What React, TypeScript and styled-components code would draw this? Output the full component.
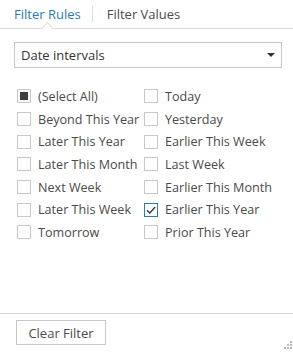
import styled, { createGlobalStyle } from "styled-components";

const GlobalStyle = createGlobalStyle`
  html, body {
    margin: 0;
    padding: 0;
    background: #fff;
  }
  * {
    box-sizing: border-box;
  }
`;

const leftItems = [
  "(Select All)",
  "Beyond This Year",
  "Later This Year",
  "Later This Month",
  "Next Week",
  "Later This Week",
  "Tomorrow",
];

const rightItems = [
  "Today",
  "Yesterday",
  "Earlier This Week",
  "Last Week",
  "Earlier This Month",
  "Earlier This Year",
  "Prior This Year",
];

type BoxState = "off" | "on" | "partial";

const stateFor = (label: string): BoxState => {
  if (label === "(Select All)") return "partial";
  if (label === "Earlier This Year") return "on";
  return "off";
};

const CheckItem = ({ label }: { label: string }) => {
  const state = stateFor(label);
  return (
    <Item>
      <Box checked={state === "on"}>
        {state === "partial" && <Fill />}
        {state === "on" && (
          <svg width="12" height="12" viewBox="0 0 12 12">
            <path d="M2 6.2 L4.8 9 L10.2 3" fill="none" stroke="#333" strokeWidth="1.3" />
          </svg>
        )}
      </Box>
      <Label>{label}</Label>
    </Item>
  );
};

const App = () => {
  return (
    <>
      <GlobalStyle />
      <Panel>
        <Tabs>
          <Tab active>Filter Rules</Tab>
          <Divider />
          <Tab>Filter Values</Tab>
        </Tabs>
        <Body>
          <Select>
            <span>Date intervals</span>
            <Arrow />
          </Select>
          <Grid>
            <Column>
              {leftItems.map((l) => (
                <CheckItem key={l} label={l} />
              ))}
            </Column>
            <Column>
              {rightItems.map((l) => (
                <CheckItem key={l} label={l} />
              ))}
            </Column>
          </Grid>
        </Body>
        <Footer>
          <Button>Clear Filter</Button>
          <Grip>
            <svg width="8" height="8" viewBox="0 0 8 8">
              {[
                [6, 0],
                [6, 3],
                [3, 3],
                [6, 6],
                [3, 6],
                [0, 6],
              ].map(([x, y]) => (
                <rect key={`${x}-${y}`} x={x} y={y} width="2" height="2" fill="#b8b8b8" />
              ))}
            </svg>
          </Grip>
        </Footer>
      </Panel>
    </>
  );
};

export default App;

const Panel = styled.div`
  position: relative;
  width: 293px;
  height: 352px;
  display: flex;
  flex-direction: column;
  font-family: "Open Sans", "Noto Sans", sans-serif;
  font-size: 12.5px;
  color: #4a4a4a;
  background: #fff;
`;

const Tabs = styled.div`
  height: 29px;
  display: flex;
  align-items: center;
  padding: 0 0 0 14px;
  border-bottom: 1px solid #dadada;
`;

const Tab = styled.div<{ active?: boolean }>`
  position: relative;
  height: 28px;
  line-height: 28px;
  font-size: 13px;
  color: ${({ active }) => (active ? "#2b79b5" : "#4a4a4a")};
  padding-right: ${({ active }) => (active ? "11px" : "0")};
  padding-left: ${({ active }) => (active ? "0" : "14px")};

  ${({ active }) =>
    active &&
    `
    &::after {
      content: "";
      position: absolute;
      left: 29px;
      bottom: -1px;
      width: 8px;
      height: 8px;
      background: #fff;
      border-left: 1px solid #dadada;
      border-top: 1px solid #dadada;
      transform: translateY(4px) rotate(45deg);
    }
  `}
`;

const Divider = styled.div`
  width: 1px;
  height: 16px;
  background: #dcdcdc;
`;

const Body = styled.div`
  flex: 1;
  padding: 13px 11px 0 14px;
`;

const Select = styled.div`
  height: 26px;
  border: 1px solid #c6c6c6;
  display: flex;
  align-items: center;
  justify-content: space-between;
  padding: 0 6px 0 6px;
  font-size: 13px;
  color: #333;
`;

const Arrow = styled.div`
  width: 0;
  height: 0;
  border-left: 4px solid transparent;
  border-right: 4px solid transparent;
  border-top: 4px solid #333;
`;

const Grid = styled.div`
  display: grid;
  grid-template-columns: 127px 1fr;
  margin-top: 17px;
  padding-left: 3px;
`;

const Column = styled.div`
  display: flex;
  flex-direction: column;
`;

const Item = styled.div`
  height: 22.7px;
  display: flex;
  align-items: center;
  gap: 7px;
`;

const Box = styled.div<{ checked?: boolean }>`
  width: 14px;
  height: 14px;
  flex-shrink: 0;
  border: 1px solid ${({ checked }) => (checked ? "#2b79b5" : "#c8c8c8")};
  display: flex;
  align-items: center;
  justify-content: center;
  background: #fff;
`;

const Fill = styled.div`
  width: 8px;
  height: 8px;
  background: #3c3c3c;
`;

const Label = styled.span`
  white-space: nowrap;
  font-size: 12.6px;
  color: #4a4a4a;
`;

const Footer = styled.div`
  height: 39px;
  border-top: 1px solid #dadada;
  display: flex;
  align-items: flex-start;
  padding: 6px 0 0 16px;
`;

const Button = styled.button`
  width: 90px;
  height: 25px;
  border: 1px solid #c6c6c6;
  background: #fff;
  font-family: "Open Sans", "Noto Sans", sans-serif;
  font-size: 13px;
  color: #4a4a4a;
  padding: 0;
`;

const Grip = styled.div`
  position: absolute;
  right: 1px;
  bottom: 3px;
  line-height: 0;
`;
